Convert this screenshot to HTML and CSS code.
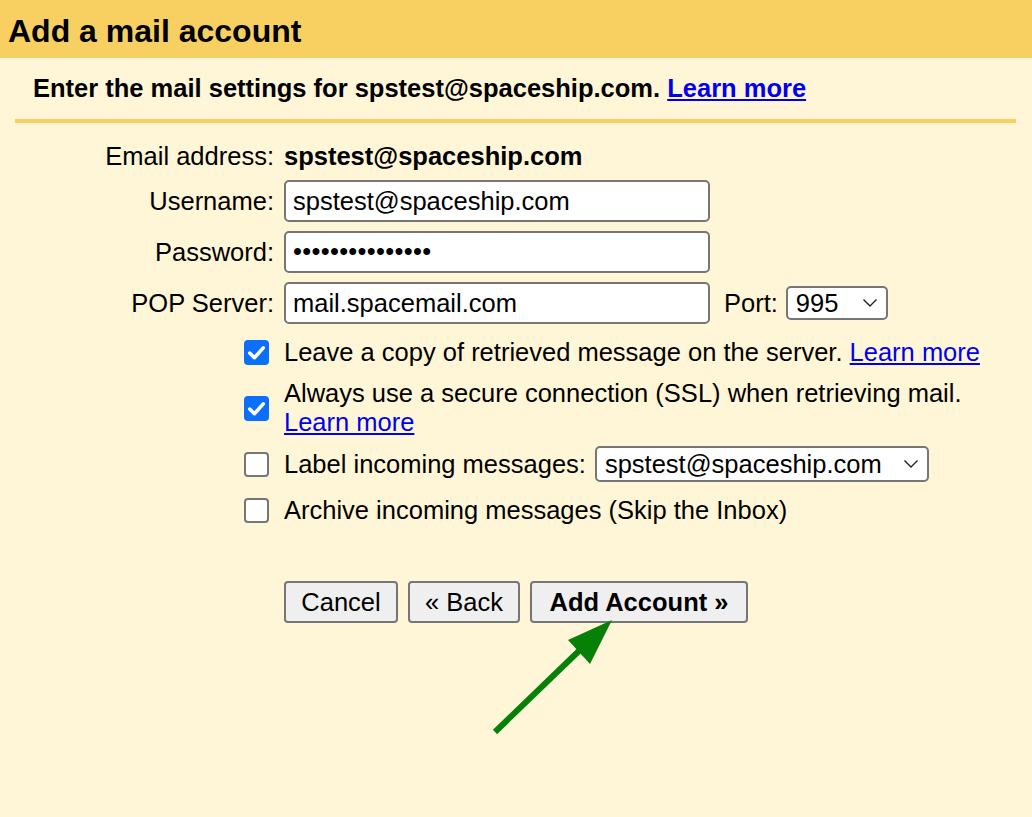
FILE: index.html
```html
<!DOCTYPE html>
<html>
<head>
<meta charset="utf-8">
<link rel="stylesheet" href="styles.css">
</head>
<body>
<div class="page">
  <div class="header"><h1 class="title">Add a mail account</h1></div>
  <div class="sub">
    <p class="intro">Enter the mail settings for spstest@spaceship.com. <a class="link" href="#">Learn more</a></p>
  </div>
  <div class="rule"></div>
  <div class="form">
    <div class="label">Email address:</div>
    <div class="value bold">spstest@spaceship.com</div>

    <div class="label">Username:</div>
    <div class="value"><div class="input">spstest@spaceship.com</div></div>

    <div class="label">Password:</div>
    <div class="value"><div class="input dots">•••••••••••••••</div></div>

    <div class="label">POP Server:</div>
    <div class="value row">
      <div class="input">mail.spacemail.com</div>
      <span class="port-label">Port:</span>
      <div class="select port"><span>995</span><svg class="chev" viewBox="0 0 16 10" width="16" height="10"><path d="M1.5 1.5 L8 8 L14.5 1.5" fill="none" stroke="#222" stroke-width="1.4"/></svg></div>
    </div>

    <div class="cb-cell c1"><span class="cb checked"><svg viewBox="0 0 24 24" width="25" height="25"><path d="M5.5 12.5 L10 17 L18.5 7.5" fill="none" stroke="#fff" stroke-width="3.4" stroke-linecap="round" stroke-linejoin="round"/></svg></span></div>
    <div class="text c1">Leave a copy of retrieved message on the server. <a class="link" href="#">Learn more</a></div>

    <div class="cb-cell c2"><span class="cb checked"><svg viewBox="0 0 24 24" width="25" height="25"><path d="M5.5 12.5 L10 17 L18.5 7.5" fill="none" stroke="#fff" stroke-width="3.4" stroke-linecap="round" stroke-linejoin="round"/></svg></span></div>
    <div class="text c2">Always use a secure connection (SSL) when retrieving mail.<br><a class="link" href="#">Learn more</a></div>

    <div class="cb-cell c3"><span class="cb"></span></div>
    <div class="text c3 row">Label incoming messages: <div class="select lab"><span>spstest@spaceship.com</span><svg class="chev" viewBox="0 0 16 10" width="16" height="10"><path d="M1.5 1.5 L8 8 L14.5 1.5" fill="none" stroke="#222" stroke-width="1.4"/></svg></div></div>

    <div class="cb-cell c4"><span class="cb"></span></div>
    <div class="text c4">Archive incoming messages (Skip the Inbox)</div>

    <div class="buttons">
      <button class="btn cancel">Cancel</button>
      <button class="btn back">« Back</button>
      <button class="btn add">Add Account »</button>
    </div>
  </div>
  <svg class="arrow" width="1032" height="817" viewBox="0 0 1032 817">
    <line x1="495" y1="732" x2="582" y2="648" stroke="#068006" stroke-width="6"/>
    <polygon points="612,620 568,640 590,664" fill="#068006"/>
  </svg>
</div>
</body>
</html>
```

FILE: styles.css
```css
* { box-sizing: border-box; }
html, body { margin: 0; padding: 0; }
body {
  background: #fff6d8;
  font-family: "Liberation Sans", Arial, sans-serif;
  color: #000;
  width: 1032px;
  height: 817px;
  overflow: hidden;
}
.page { position: relative; width: 1032px; height: 817px; }
.header {
  background: #f8d062;
  height: 58px;
  padding-left: 8px;
  display: flex;
  align-items: center;
}
.title {
  margin: 0;
  font-size: 32px;
  font-weight: bold;
  line-height: 1;
  padding-top: 4px;
}
.sub { padding-left: 33px; height: 61px; display: flex; align-items: center; }
.intro { margin: 0; font-size: 25.5px; font-weight: bold; line-height: 29px; }
.link { color: #0000ee; text-decoration: underline; font-weight: inherit; }
.rule { margin: 0 16px 0 15px; height: 4px; background: #f8d062; }
.form {
  display: grid;
  grid-template-columns: 274px 1fr;
  column-gap: 10px;
  row-gap: 9px;
  font-size: 25.5px;
  line-height: 29px;
  padding-top: 19px;
  align-items: center;
}
.label { text-align: right; }
.bold { font-weight: bold; }
.row { display: flex; align-items: center; }
.input {
  width: 426px;
  height: 42px;
  border: 2px solid #767676;
  border-radius: 5px;
  background: #fff;
  padding: 0 7px;
  display: flex;
  align-items: center;
  font-size: 25.5px;
}
.dots { letter-spacing: 0.3px; padding-bottom: 1px; }
.port-label { margin-left: 14px; margin-right: 8px; }
.select {
  background: #fff;
  border: 2px solid #767676;
  border-radius: 5px;
  display: flex;
  align-items: center;
  justify-content: space-between;
  padding: 0 8px 0 8px;
}
.port { width: 102px; height: 34px; }
.lab { width: 334px; height: 36px; margin-left: 9px; }
.chev { flex: none; }
.cb-cell { justify-self: end; margin-right: 5px; display: flex; }
.cb {
  width: 25px; height: 25px;
  border: 2px solid #767676;
  border-radius: 4px;
  background: #fff;
  display: block;
}
.cb.checked { background: #0b6ffb; border: none; }
.cb svg { display: block; }
.c1 { margin-top: 5px; }
.c2 { margin-top: 3px; }
.c3 { margin-top: 0; }
.c4 { margin-top: 5px; }
.buttons {
  grid-column: 2;
  display: flex;
  gap: 10px;
  margin-top: 47px;
}
.btn {
  font-family: "Liberation Sans", Arial, sans-serif;
  font-size: 25.5px;
  height: 42px;
  background: #efefef;
  border: 2px solid #767676;
  border-radius: 4px;
  color: #000;
  padding: 0;
}
.cancel { width: 114px; }
.back { width: 112px; }
.add { width: 218px; font-weight: bold; }
.arrow { position: absolute; left: 0; top: 0; pointer-events: none; }
```
